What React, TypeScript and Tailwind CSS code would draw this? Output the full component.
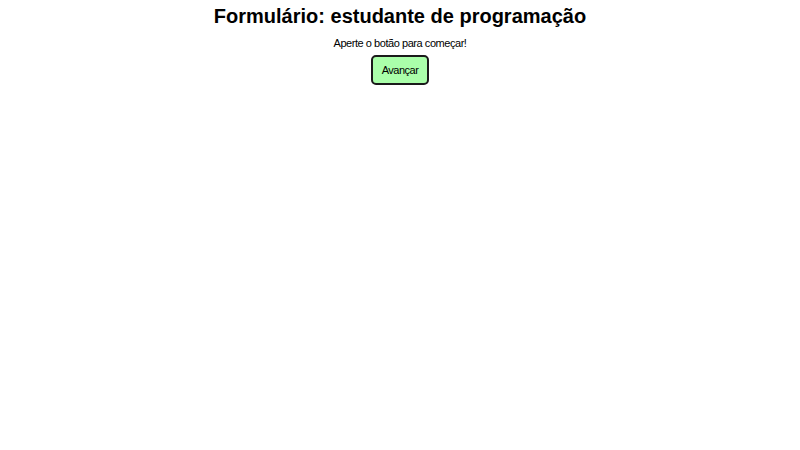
import React from 'react';

const App: React.FC = () => {
    return (
        <div className="flex flex-col items-center text-black font-['Liberation_Sans',Arial,sans-serif]">
            <h1 className="mt-[4px] text-[20px] font-bold leading-[24px]">Formulário: estudante de programação</h1>
            <p className="mt-[8px] text-[11px] leading-[14px] tracking-[-0.45px]">Aperte o botão para começar!</p>
            <button className="mt-[5px] h-[30px] px-[9px] rounded-[5px] border-2 border-[#1a1a1a] bg-[#aaffaa] text-[11px] tracking-[-0.5px]">
                Avançar
            </button>
        </div>
    );
};

export default App;
